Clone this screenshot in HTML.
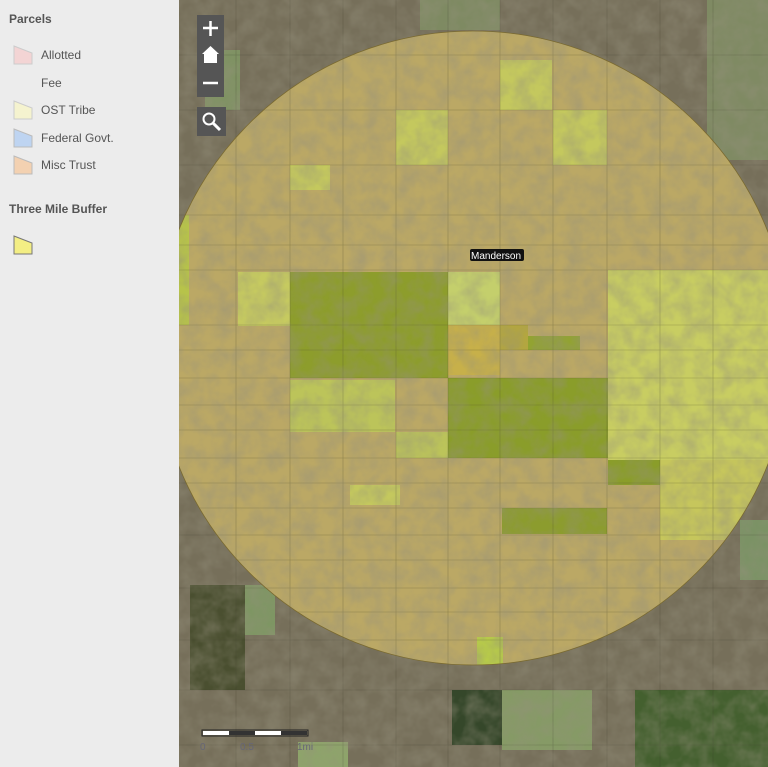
<!DOCTYPE html>
<html><head><style>
html,body{margin:0;padding:0;width:768px;height:767px;overflow:hidden;background:#7a6e5a;font-family:"Liberation Sans",sans-serif}
#side{position:absolute;left:0;top:0;width:179px;height:767px;background:#ececec;color:#555}
.h{position:absolute;left:9px;font-size:12px;font-weight:bold;color:#555}
.it{position:absolute;left:41px;font-size:12px;color:#555}
.sw{position:absolute;left:13px}
#map{position:absolute;left:179px;top:0;width:589px;height:767px;overflow:hidden}
#map svg{display:block}
.btn{position:absolute;background:#555;}
</style></head><body>
<div id="map">
<svg width="589" height="767" viewBox="179 0 589 767">
<defs>
<filter id="n" x="0" y="0" width="100%" height="100%">
<feTurbulence type="fractalNoise" baseFrequency="0.06" numOctaves="3" seed="4"/>
<feColorMatrix type="matrix" values="0 0 0 0 0.3  0 0 0 0 0.28  0 0 0 0 0.2  0 0 0 1.6 -0.5"/>
</filter>
</defs>
<rect x="179" y="0" width="589" height="767" fill="#7a6b5c"/>
<rect x="179" y="0" width="589" height="767" fill="#6c7a55" opacity="0.25"/>
<rect x="707" y="0" width="61" height="160" fill="#7f8a63"/>
<rect x="420" y="0" width="80" height="30" fill="#7e8a62"/>
<rect x="190" y="585" width="55" height="105" fill="#4a4f30"/>
<rect x="245" y="585" width="30" height="50" fill="#7e9663"/>
<rect x="452" y="690" width="50" height="55" fill="#35472a"/>
<rect x="502" y="690" width="90" height="60" fill="#869a66"/>
<rect x="635" y="690" width="133" height="77" fill="#44602f"/>
<rect x="298" y="742" width="50" height="25" fill="#8ea56a"/>
<rect x="740" y="520" width="28" height="60" fill="#7b9265"/>
<rect x="205" y="50" width="35" height="60" fill="#7f9263"/>
<g fill="none" stroke="#3a3a2a" stroke-width="0.6" opacity="0.35">
<path d="M179 55H768M179 110H768M179 165H768M179 215H768M179 270H768M179 325H768M179 378H768M179 430H768M179 483H768M179 535H768M179 588H768M179 640H768M179 690H768M179 745H768"/>
<path d="M236 0V767M290 0V767M343 0V767M396 0V767M448 0V767M500 0V767M553 0V767M607 0V767M660 0V767M713 0V767"/>
</g>
<clipPath id="c"><circle cx="473" cy="348" r="317"/></clipPath>
<g clip-path="url(#c)">
<rect x="150" y="30" width="640" height="640" fill="#bba865"/>
<rect x="290" y="272" width="158" height="106" fill="#8d9d2c"/>
<rect x="448" y="272" width="52" height="80" fill="#c4cf6c"/>
<rect x="448" y="325" width="52" height="50" fill="#c7b04a"/>
<rect x="500" y="325" width="28" height="25" fill="#b3a640"/>
<rect x="528" y="336" width="52" height="14" fill="#92a332"/>
<rect x="448" y="378" width="160" height="80" fill="#8a9d2a"/>
<rect x="608" y="400" width="52" height="85" fill="#8a9d2a"/>
<rect x="502" y="508" width="105" height="26" fill="#8c9c2e"/>
<rect x="608" y="270" width="160" height="190" fill="#c8cd62"/>
<rect x="238" y="272" width="52" height="54" fill="#c6ca60"/>
<rect x="290" y="380" width="105" height="52" fill="#bcc45a"/>
<rect x="396" y="432" width="52" height="26" fill="#bcc45a"/>
<rect x="396" y="110" width="52" height="55" fill="#c4c85e"/>
<rect x="553" y="110" width="54" height="55" fill="#c4c85e"/>
<rect x="500" y="60" width="52" height="50" fill="#c4c85e"/>
<rect x="290" y="165" width="40" height="25" fill="#c4c85e"/>
<rect x="350" y="485" width="50" height="20" fill="#c4c85e"/>
<rect x="477" y="637" width="26" height="28" fill="#b8cc48"/>
<rect x="660" y="460" width="108" height="80" fill="#c6c65c"/>
<rect x="179" y="215" width="10" height="110" fill="#b7c34a"/>
<g fill="none" stroke="#4a4a2a" stroke-width="0.6" opacity="0.4">
<path d="M179 55H768M179 110H768M179 165H768M179 215H768M179 245H768M179 270H768M179 325H768M179 350H768M179 378H768M179 405H768M179 430H768M179 458H768M179 483H768M179 508H768M179 535H768M179 560H768M179 588H768M179 612H768M179 640H768"/>
<path d="M236 0V767M290 0V767M343 0V767M396 0V767M448 0V767M500 0V767M553 0V767M607 0V767M660 0V767M713 0V767"/>
</g>
</g>
<rect x="179" y="0" width="589" height="767" filter="url(#n)" opacity="0.5"/>
<circle cx="473" cy="348" r="317" fill="none" stroke="#7a6a30" stroke-width="0.8"/>
<rect x="470" y="249" width="54" height="12" rx="2" fill="#111"/>
<text x="471" y="259" font-family="Liberation Sans" font-size="10" fill="#fff">Manderson</text>
<g>
<rect x="203" y="731" width="26" height="4" fill="#fff"/><rect x="229" y="731" width="26" height="4" fill="#333"/>
<rect x="255" y="731" width="26" height="4" fill="#fff"/><rect x="281" y="731" width="26" height="4" fill="#333"/>
<rect x="202" y="730" width="106" height="6" fill="none" stroke="#222" stroke-width="1"/>
<text x="200" y="750" font-size="10" fill="#667">0</text><text x="240" y="750" font-size="10" fill="#667">0.5</text><text x="297" y="750" font-size="10" fill="#667">1mi</text>
</g>
</svg>
</div>
<div class="btn" style="left:197px;top:15px;width:27px;height:82px"></div>
<svg style="position:absolute;left:197px;top:15px" width="30" height="122">
<path d="M6 13H21M13.5 6V21" stroke="#fff" stroke-width="2.5"/>
<path d="M13.5 31L5 39H7V48H20V39H22Z" fill="#fff"/>
<path d="M6 68H21" stroke="#fff" stroke-width="2.5"/>
<rect x="0" y="92" width="29" height="29" fill="#555"/>
<circle cx="12" cy="104" r="5.5" fill="none" stroke="#fff" stroke-width="2"/>
<path d="M16 108L23 115" stroke="#fff" stroke-width="3"/>
</svg>
<div id="side">
<div class="h" style="top:12px">Parcels</div>
<svg class="sw" style="top:45px" width="22" height="20"><path d="M1 1L19 8V19H1Z" fill="#f3d4d4" stroke="#ccc"/></svg>
<div class="it" style="top:48px">Allotted</div>
<div class="it" style="top:76px">Fee</div>
<svg class="sw" style="top:100px" width="22" height="20"><path d="M1 1L19 8V19H1Z" fill="#f5f3cf" stroke="#ccc"/></svg>
<div class="it" style="top:103px">OST Tribe</div>
<svg class="sw" style="top:128px" width="22" height="20"><path d="M1 1L19 8V19H1Z" fill="#bed4f1" stroke="#bbb"/></svg>
<div class="it" style="top:131px">Federal Govt.</div>
<svg class="sw" style="top:155px" width="22" height="20"><path d="M1 1L19 8V19H1Z" fill="#f3d1b1" stroke="#bbb"/></svg>
<div class="it" style="top:158px">Misc Trust</div>
<div class="h" style="top:202px">Three Mile Buffer</div>
<svg class="sw" style="top:235px" width="22" height="20"><path d="M1 1L19 8V19H1Z" fill="#f3ee84" stroke="#777"/></svg>
</div>
</body></html>
